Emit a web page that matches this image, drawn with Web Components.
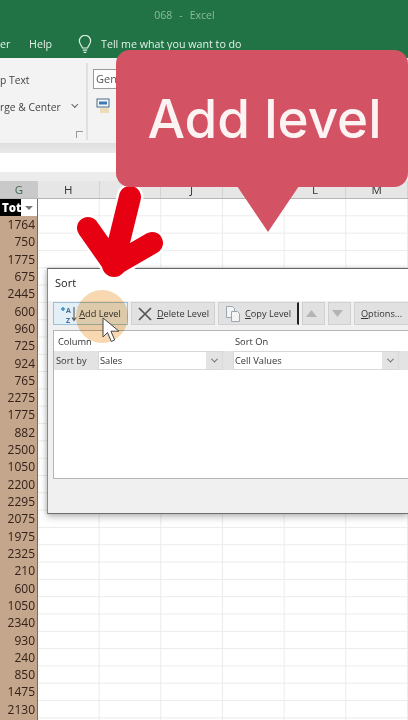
<!DOCTYPE html>
<html>
<head>
<meta charset="utf-8">
<style>
  html, body { margin: 0; padding: 0; background: #fff; }
  body { width: 408px; height: 720px; overflow: hidden; position: relative; font-family: "Open Sans", "Noto Sans", sans-serif; }
</style>
</head>
<body>
<excel-titlebar></excel-titlebar>
<excel-ribbon></excel-ribbon>
<excel-sheet></excel-sheet>
<sort-dialog>
  <sort-button slot="tools" kind="add" w="75" active><u>A</u>dd Level</sort-button>
  <sort-button slot="tools" kind="del" w="84"><u>D</u>elete Level</sort-button>
  <sort-button slot="tools" kind="copy" w="81"><u>C</u>opy Level</sort-button>
  <sort-button slot="tools" kind="up" w="23"></sort-button>
  <sort-button slot="tools" kind="down" w="23"></sort-button>
  <sort-button slot="tools" kind="text" w="55"><u>O</u>ptions...</sort-button>
</sort-dialog>
<click-marker></click-marker>
<red-arrow></red-arrow>
<tip-callout>Add level</tip-callout>

<script>
class ExcelTitlebar extends HTMLElement {
  connectedCallback() {
    this.attachShadow({ mode: 'open' });
    this.shadowRoot.innerHTML = `
      <style>
        :host { display: block; height: 58px; background: #217346; color: #e3f0e8; font-size: 10.7px; box-sizing: border-box; }
        .title { height: 30px; display: flex; justify-content: center; align-items: center; gap: 7px; color: #8dbb9f; font-size: 10.5px; padding-right: 39px; }
        .menu { display: flex; align-items: center; height: 28px; }
        .menu span { white-space: nowrap; }
        .er { width: 29px; }
        .help { width: 48px; }
        svg { width: 16px; height: 19px; margin-right: 8px; }
      </style>
      <div class="title"><span>068</span><span>-</span><span>Excel</span></div>
      <div class="menu">
        <span class="er">er</span>
        <span class="help">Help</span>
        <svg viewBox="0 0 16 19" fill="none" stroke="#dcefe3" stroke-width="1.2">
          <path d="M5.4 13c-.2-2-3-3.400-3-7a5.600 5.600 0 0 1 11.200 0c0 3.600-2.800 5-3 7z"/>
          <path d="M5.800 15.200h4.400M6.600 17.400h2.800"/>
        </svg>
        <span>Tell me what you want to do</span>
      </div>`;
  }
}
customElements.define('excel-titlebar', ExcelTitlebar);

class ExcelRibbon extends HTMLElement {
  connectedCallback() {
    this.attachShadow({ mode: 'open' });
    this.shadowRoot.innerHTML = `
      <style>
        :host { display: block; color: #444; font-size: 10.3px; }
        .band { height: 85px; background: #f3f3f3; display: flex; box-sizing: border-box; padding: 5px 0 3px; }
        .align { width: 88px; position: relative; display: flex; flex-direction: column; gap: 10px; padding-top: 8px; box-sizing: border-box; border-right: 2px solid #e0e0e0; }
        .align div { display: flex; height: 17px; align-items: center; white-space: nowrap; }
        .chev { margin-left: 12px; width: 4px; height: 4px; border-right: 1px solid #666; border-bottom: 1px solid #666; transform: rotate(45deg) translate(-2px, -1px); }
        .launch { position: absolute; right: 3px; bottom: 2px; width: 6px; height: 6px; border: 1px solid #999; border-width: 1px 0 0 1px; }
        .number { padding: 6px 0 0 5px; }
        .gen { width: 40px; height: 20px; box-sizing: border-box; border: 1px solid #9a9a9a; background: #fff; padding-left: 2px; line-height: 18px; color: #555; font-size: 11px; }
        .number svg { display: block; width: 15px; height: 15px; margin: 9px 0 0 3px; }
        .shade { height: 10px; background: linear-gradient(#dedede, #e9e9e9); }
        .formula { height: 19px; background: #fff; }
        .gap { height: 9px; background: #ececec; }
      </style>
      <div class="band">
        <div class="align">
          <div>p Text</div>
          <div>rge &amp; Center<i class="chev"></i></div>
          <i class="launch"></i>
        </div>
        <div class="number">
          <div class="gen">Gen</div>
          <svg viewBox="0 0 15 15">
            <rect x="1" y="1" width="12" height="8" fill="#f4f6f8" stroke="#4a6a88"/>
            <rect x="3" y="3.500" width="8" height="3" fill="#3d7bb5"/>
            <rect x="4" y="10" width="9" height="5" fill="#ecdcb8"/>
          </svg>
        </div>
      </div>
      <div class="shade"></div>
      <div class="formula"></div>
      <div class="gap"></div>`;
  }
}
customElements.define('excel-ribbon', ExcelRibbon);

const TOTALS = [1764, 750, 1775, 675, 2445, 600, 960, 725, 924, 765, 2275, 1775, 882, 2500, 1050, 2200, 2295, 2075, 1975, 2325, 210, 600, 1050, 2340, 930, 240, 850, 1475, 2130];

class ExcelSheet extends HTMLElement {
  connectedCallback() {
    this.attachShadow({ mode: 'open' });
    const cols = ['H', 'I', 'J', 'K', 'L', 'M'];
    this.shadowRoot.innerHTML = `
      <style>
        :host { display: block; font-size: 12px; color: #333; }
        .heads { display: flex; height: 18px; background: #e6e6e6; border-bottom: 1px solid #b5b5b5; box-sizing: border-box; }
        .heads div { flex: 0 0 61.66px; text-align: center; line-height: 18px; font-size: 11.5px; box-sizing: border-box; border-right: 1px solid #d2d2d2; }
        .heads .g { flex: 0 0 38px; background: #c9c9c9; color: #3d6b52; border-right: 0; }
        .body { display: flex; }
        .col-g { width: 38px; flex: none; box-sizing: border-box; border-right: 1px solid #4c8064; background: #c3a68b; }
        .top { height: 17px; display: flex; background: #000; color: #fff; font-weight: 700; line-height: 17px; font-size: 11.5px; padding-left: 2px; }
        .top b { width: 19px; white-space: nowrap; }
        .filter { flex: none; width: 16px; background: #fff; display: flex; align-items: center; justify-content: center; }
        .filter i { border: 4px solid transparent; border-top: 4px solid #777; border-bottom: 0; }
        .num { height: 17.32px; line-height: 17.32px; text-align: right; padding-right: 2px; color: #33211a; font-weight: 500; font-size: 12px; }
        .cells { flex: 1; height: 540px;
          background-image:
            linear-gradient(to right, #ebebeb 1px, transparent 1px),
            linear-gradient(to bottom, #ebebeb 1px, transparent 1px);
          background-size: 61.66px 17.32px;
          background-position: 60.66px 16.32px; }
      </style>
      <div class="heads">
        <div class="g">G</div>
        ${cols.map(c => `<div>${c}</div>`).join('')}
      </div>
      <div class="body">
        <div class="col-g">
          <div class="top"><b>Tot</b><span class="filter"><i></i></span></div>
          ${TOTALS.map(n => `<div class="num">${n}</div>`).join('')}
        </div>
        <div class="cells"></div>
      </div>`;
  }
}
customElements.define('excel-sheet', ExcelSheet);

const BTN_ICONS = {
  add: `<svg width="18" height="20" viewBox="0 0 18 20">
      <path d="M1 5h4M3 3v4" stroke="#3f8fc4" stroke-width="1.500"/>
      <text x="6" y="8.500" font-size="7" font-weight="700" fill="#3a6d96" font-family="Open Sans">A</text>
      <text x="6" y="19" font-size="7" font-weight="700" fill="#3a6d96" font-family="Open Sans">Z</text>
      <path d="M14 3v13M12 13.500l2 3 2-3" fill="none" stroke="#555" stroke-width="1.100"/>
    </svg>`,
  del: `<svg width="16" height="16" viewBox="0 0 16 16"><path d="M2 2l12 12M14 2L2 14" stroke="#555" stroke-width="1.700"/></svg>`,
  copy: `<svg width="16" height="18" viewBox="0 0 16 18" fill="#f4f4f4" stroke="#9aa7b2">
      <path d="M1.500 1.500h6l2 2v9h-8z"/><path d="M6.500 6.500h6l2 2v8h-8z"/></svg>`,
  up: `<svg width="11" height="7" viewBox="0 0 11 7"><path d="M5.500 0L11 7H0z" fill="#b4b4b4"/></svg>`,
  down: `<svg width="11" height="7" viewBox="0 0 11 7"><path d="M5.500 7L11 0H0z" fill="#b4b4b4"/></svg>`
};

class SortButton extends HTMLElement {
  connectedCallback() {
    this.attachShadow({ mode: 'open' });
    const kind = this.getAttribute('kind');
    this.shadowRoot.innerHTML = `
      <style>
        :host { display: flex; flex: none; height: 23px; box-sizing: border-box; width: ${this.getAttribute('w')}px;
          background: #e1e1e1; border: 1px solid #d0d0d0; font-size: 9.2px; color: #333; }
        :host([active]) { background: #e3eff7; border-color: #9cc0d8; }
        .in { flex: 1; display: flex; align-items: center; justify-content: center; gap: ${kind === 'add' ? 1 : 4}px; white-space: nowrap; }
        svg { flex: none; }
      </style>
      <div class="in">${BTN_ICONS[kind] || ''}<span><slot></slot></span></div>`;
  }
}
customElements.define('sort-button', SortButton);

class SortDialog extends HTMLElement {
  connectedCallback() {
    this.attachShadow({ mode: 'open' });
    const combo = (label, w) => `
      <div class="combo" style="width:${w}px">
        <span>${label}</span><i><b></b></i>
      </div>`;
    this.shadowRoot.innerHTML = `
      <style>
        :host { display: block; position: absolute; left: 47px; top: 268px; width: 361px; height: 246px; box-sizing: border-box;
          background: #f0f0f0; border: 1px solid #8a8a8a; border-right: 0; border-top-color: #666; border-bottom-color: #6f6f6f;
          box-shadow: 0 3px 7px rgba(0,0,0,.25), -1px 0 4px rgba(0,0,0,.12);
          color: #333; font-size: 9.3px; }
        .title { height: 32px; background: #fff; font-size: 11px; line-height: 27px; padding-left: 7px; color: #222; box-sizing: border-box; }
        .tools { display: flex; gap: 3px; padding: 1px 0 0 5px; height: 29px; box-sizing: border-box; }
        .tools ::slotted(sort-button:nth-child(3)) { border-right: 2px solid #222; }
        .list { margin-left: 5px; height: 149px; box-sizing: border-box; background: #fff; border: 1px solid #b4b4b4; border-right: 0; }
        .labels { display: flex; height: 20px; align-items: center; padding-left: 4px; }
        .labels span:first-child { width: 177px; }
        .row { display: flex; align-items: center; height: 19px; background: #e3e3e3; padding-left: 2px; }
        .row > span { width: 42px; flex: none; }
        .combo { height: 19px; flex: none; background: #fff; display: flex; align-items: center; justify-content: space-between; box-sizing: border-box; padding-left: 1px; border: 1px solid #d8d8d8; }
        .combo i { width: 16px; height: 17px; background: #e3e3e3; display: flex; align-items: center; justify-content: center; }
        .combo b { width: 4px; height: 4px; border-right: 1px solid #666; border-bottom: 1px solid #666; transform: rotate(45deg) translate(-1px, -1px); }
        .gap { width: 10px; flex: none; }
      </style>
      <div class="title">Sort</div>
      <div class="tools"><slot name="tools"></slot></div>
      <div class="list">
        <div class="labels"><span>Column</span><span>Sort On</span></div>
        <div class="row">
          <span>Sort by</span>
          ${combo('Sales', 125)}
          <div class="gap"></div>
          ${combo('Cell Values', 166)}
        </div>
      </div>`;
  }
}
customElements.define('sort-dialog', SortDialog);

class ClickMarker extends HTMLElement {
  connectedCallback() {
    this.attachShadow({ mode: 'open' });
    this.shadowRoot.innerHTML = `
      <style>
        :host { display: block; position: absolute; left: 76px; top: 290px; width: 52px; height: 53px; }
        .dot { position: absolute; inset: 0; border-radius: 50%; background: #f8d8b0; mix-blend-mode: multiply; }
        svg { position: absolute; left: 26px; top: 27px; width: 19px; height: 27px; }
      </style>
      <div class="dot"></div>
      <svg viewBox="0 0 19 27">
        <path d="M1 1v19l4.500-4.500 3.800 9 3.400-1.500-3.800-8.800H17z" fill="#fff" stroke="#444" stroke-width="1"/>
      </svg>`;
  }
}
customElements.define('click-marker', ClickMarker);

class RedArrow extends HTMLElement {
  connectedCallback() {
    this.attachShadow({ mode: 'open' });
    this.shadowRoot.innerHTML = `
      <style>
        :host { display: block; position: absolute; left: 70px; top: 180px; width: 100px; height: 110px; }
        svg { display: block; }
      </style>
      <svg width="100" height="110" viewBox="70 180 100 110" fill="none" stroke-linecap="round" stroke-linejoin="round">
        <path d="M130 197L114 262M88 228L114 265L152 243" stroke="#fff" stroke-width="27"/>
        <path d="M114 252L114 265" stroke="#fff" stroke-width="27"/>
        <path d="M130 197L114 262M88 228L114 265L152 243" stroke="#e60012" stroke-width="22"/>
        <path d="M114 252L114 265" stroke="#e60012" stroke-width="24"/>
      </svg>`;
  }
}
customElements.define('red-arrow', RedArrow);

class TipCallout extends HTMLElement {
  connectedCallback() {
    this.attachShadow({ mode: 'open' });
    this.shadowRoot.innerHTML = `
      <style>
        :host { display: block; position: absolute; left: 116px; top: 50px; width: 292px; height: 137px; }
        .box { height: 100%; box-sizing: border-box; padding-left: 5px; background: #d35365; border-radius: 14px; display: flex; align-items: center; justify-content: center;
          font-family: Inter, "Open Sans", sans-serif; font-weight: 500; font-size: 53px; color: #fdf3f3; white-space: nowrap; }
        .tail { position: absolute; left: 121px; top: 136px; width: 0; height: 0;
          border-left: 31px solid transparent; border-right: 31px solid transparent; border-top: 46px solid #d35365; }
      </style>
      <div class="box"><slot></slot></div>
      <div class="tail"></div>`;
  }
}
customElements.define('tip-callout', TipCallout);
</script>
</body>
</html>
